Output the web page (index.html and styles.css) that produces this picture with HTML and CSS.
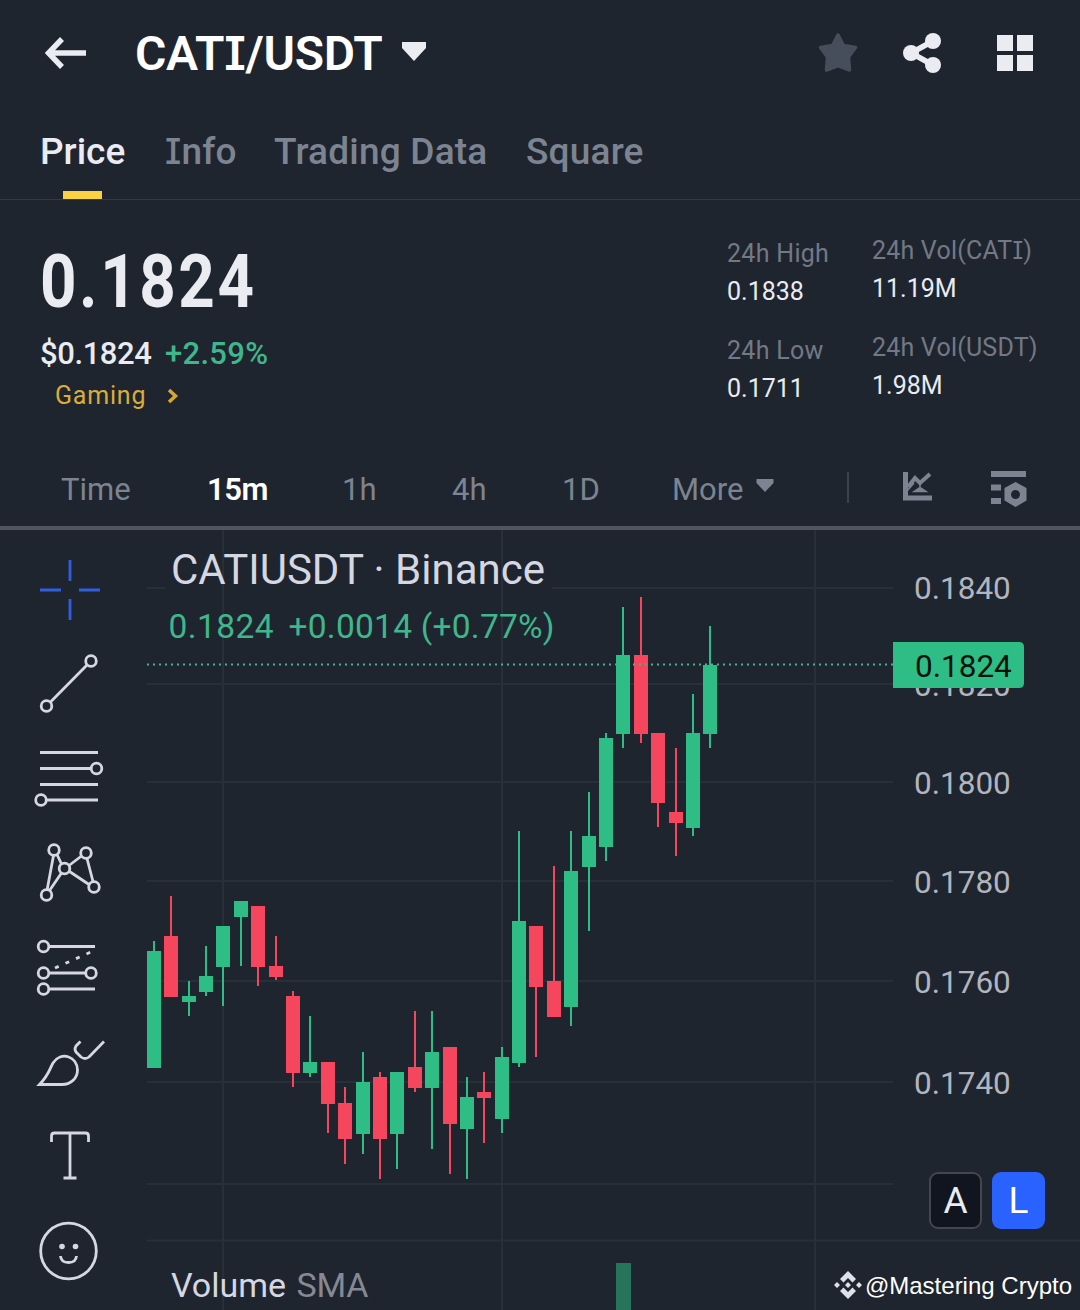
FILE: index.html
```html
<!DOCTYPE html>
<html lang="en">
<head>
  <meta charset="UTF-8">
  <meta name="viewport" content="width=device-width, initial-scale=1.0">
  <title>CATI/USDT</title>
  <link rel="stylesheet" href="styles.css">
</head>
<body>
  <!-- Header -->
  <header class="topbar">
    <svg class="back" width="42" height="34" viewBox="0 0 42 34"><path d="M17 3 L3.500 17 L17 31 M4 17 H41" fill="none" stroke="#eaecf2" stroke-width="5.500"/></svg>
    <h1 class="pair">CAT<span class="slab">I</span>/USDT</h1>
    <svg class="caret" width="26" height="20" viewBox="0 0 26 20"><path d="M1 0 H25 V6 L13 19 L1 6 Z" fill="#eaecf2"/></svg>
    <div class="actions">
      <svg width="40" height="42" viewBox="0 0 40 42"><path d="M20 3 L25.500 13.500 L37.500 15.500 L30.500 25 L31.500 38 L20 33.500 L8.500 38 L9.500 25 L2.500 15.500 L14.500 13.500 Z" fill="#474e5b" stroke="#474e5b" stroke-width="3.500" stroke-linejoin="round"/></svg>
      <svg width="40" height="42" viewBox="0 0 40 42"><path d="M31 9 L9 21 L31 33" fill="none" stroke="#eaecf2" stroke-width="5.500"/><circle cx="31" cy="9" r="8" fill="#eaecf2"/><circle cx="9" cy="21" r="8" fill="#eaecf2"/><circle cx="31" cy="33" r="8" fill="#eaecf2"/></svg>
      <svg width="36" height="36" viewBox="0 0 36 36"><path d="M0 0H16V16H0Z M20 0H36V16H20Z M0 20H16V36H0Z M20 20H36V36H20Z" fill="#eaecf2"/></svg>
    </div>
  </header>

  <!-- Tabs -->
  <nav class="tabs">
    <span class="tab active">Price</span>
    <span class="tab info"><span class="slab">I</span>nfo</span>
    <span class="tab trading">Trading Data</span>
    <span class="tab square">Square</span>
  </nav>

  <!-- Price summary -->
  <section class="summary">
    <div class="quote">
      <div class="last-price">0.1824</div>
      <div class="sub-price"><span class="fiat">$0.1824</span><span class="change">+2.59%</span></div>
      <div class="tag">Gaming <svg width="12" height="16" viewBox="0 0 12 16"><path d="M2 2 L8.500 8 L2 14" fill="none" stroke="#d9a92e" stroke-width="3.500"/></svg></div>
    </div>
    <div class="stats">
      <div class="stat-col">
        <div class="label">24h High</div>
        <div class="value">0.1838</div>
        <div class="label second">24h Low</div>
        <div class="value">0.1711</div>
      </div>
      <div class="stat-col volumes">
        <div class="label">24h Vol(CAT<span class="slab">I</span>)</div>
        <div class="value">11.19M</div>
        <div class="label second">24h Vol(USDT)</div>
        <div class="value">1.98M</div>
      </div>
    </div>
  </section>

  <!-- Intervals -->
  <nav class="intervals">
    <span>Time</span>
    <span class="active">15m</span>
    <span>1h</span>
    <span>4h</span>
    <span>1D</span>
    <span class="more">More <svg width="18" height="14" viewBox="0 0 18 14"><path d="M0.500 0 H17.500 V4 L9 13 L0.500 4 Z" fill="#7d8491"/></svg></span>
    <i class="divider"></i>
    <svg class="chart-icon" width="30" height="30" viewBox="0 0 30 30"><path d="M2.500 0 V26 H29" fill="none" stroke="#7d8491" stroke-width="5"/><path d="M5 15 L12 6 L17 11 L27 2" fill="none" stroke="#7d8491" stroke-width="4"/><path d="M4 19 L11 11 M11 19.500 L17 15.500 L23 19.500 Z M17 11 V17" fill="#7d8491" stroke="#7d8491" stroke-width="1.500"/></svg>
    <svg width="36" height="38" viewBox="0 0 36 38"><path d="M0 4 H35 M0 17.500 H10 M0 31 H10" stroke="#7d8491" stroke-width="6"/><path fill-rule="evenodd" d="M24.500 12 L35.500 18 V30.500 L24.500 37 L13.500 30.500 V18 Z M24.500 20 A4.500 4.500 0 1 0 24.500 29 A4.500 4.500 0 1 0 24.500 20 Z" fill="#7d8491"/></svg>
  </nav>

  <main class="chart-area">
    <!-- Drawing tools -->
    <aside class="tools">
      <svg viewBox="0 0 147 94" class="cross"><path d="M70 17 V38 M70 56 V77 M40 47 H61 M79 47 H100"/></svg>
      <svg viewBox="0 0 147 94"><path d="M50.500 65 L87 28"/><circle cx="46.500" cy="69" r="5.300"/><circle cx="91" cy="24" r="5.300"/></svg>
      <svg viewBox="0 0 147 94"><path d="M40 21.500 H98 M40 37.500 H91 M40 53.500 H98 M46.500 69 H98"/><circle cx="96.500" cy="37.500" r="5.300"/><circle cx="41" cy="69" r="5.300"/></svg>
      <svg viewBox="0 0 147 94"><path d="M53.500 30.500 L47.200 64.500 M57 29.500 L61.500 39 M69 40.500 L81.500 31 M87 33.500 L93 56.500 M89 59.500 L69.500 46.500 M61.500 48 L49.500 65.500"/><circle cx="54" cy="25" r="5.300"/><circle cx="86" cy="28" r="5.300"/><circle cx="64.500" cy="43.500" r="5.300"/><circle cx="46.500" cy="70" r="5.300"/><circle cx="94" cy="62" r="5.300"/></svg>
      <svg viewBox="0 0 147 94"><path d="M49 27.500 H95 M49 54 H85.500 M49 70 H95"/><path d="M55 49 L92 32.500" stroke-dasharray="4 7.500"/><circle cx="43.500" cy="27.500" r="5.300"/><circle cx="43.500" cy="54" r="5.300"/><circle cx="91" cy="54" r="5.300"/><circle cx="43.500" cy="70" r="5.300"/></svg>
      <svg viewBox="0 0 147 94"><path d="M39.500 71.500 C49 62 50 55 53 50 C61 38 77 43 77.500 57 C77.500 66 70 71.500 62 71.500 Z M80.500 28.500 L76 33 Q74 36 76 39 L81 44 Q85 47 89 44 L104 28.500"/></svg>
      <svg viewBox="0 0 147 94"><path d="M51.500 35 V29 Q51.500 26 54.500 26 H85.500 Q88.500 26 88.500 29 V35 M70 26 V71 M63.500 71 H76.500"/></svg>
      <svg viewBox="0 0 147 94"><circle cx="68.500" cy="50" r="27.800"/><path d="M60.500 55 Q61 61.500 68.500 61.500 Q76 61.500 76.500 55"/><circle class="eye" cx="62" cy="45.500" r="2.800"/><circle class="eye" cx="75.500" cy="45.500" r="2.800"/></svg>
    </aside>

    <!-- Candles, grid and price axis -->
    <div class="chart">
      <svg class="plot" width="933" height="780" viewBox="147 530 933 780">
        <path class="grid" d="M223 530 V1310 M502 530 V1310 M815 530 V1310 M147 588 H165 M552 588 H893 M147 684 H893 M147 782 H893 M147 881 H893 M147 981 H893 M147 1082 H893 M147 1184 H893 M147 1240.500 H1080"/>
        <g id="candles"></g>
        <rect x="616" y="1263" width="15" height="47" fill="#27745c"/>
        <path class="last-line" d="M147 664.500 H893"/>
        <g class="axis">
          <text x="914" y="599">0.1840</text>
          <text x="914" y="696">0.1820</text>
          <text x="914" y="794">0.1800</text>
          <text x="914" y="893">0.1780</text>
          <text x="914" y="993">0.1760</text>
          <text x="914" y="1094">0.1740</text>
          <path d="M893 642 H1019 Q1024 642 1024 647 V683 Q1024 688 1019 688 H893 Z" fill="#2ebd85"/>
          <text x="915" y="677" class="current">0.1824</text>
        </g>
        <text x="171" y="584" class="symbol" textLength="374">CATIUSDT · Binance</text>
        <text x="168.500" y="638" class="ohlc" textLength="105">0.1824</text>
        <text x="288.500" y="638" class="ohlc" textLength="266">+0.0014 (+0.77%)</text>
        <text x="171" y="1297" class="volume" textLength="115">Volume</text>
        <text x="296.500" y="1297" class="volume sma" textLength="72">SMA</text>
      </svg>
      <div class="scale-buttons">
        <span class="scale auto">A</span>
        <span class="scale log">L</span>
      </div>
      <div class="watermark">
        <svg width="28" height="28" viewBox="0 0 28 28"><path d="M14 0 L22 8 L18.500 11.500 L14 7 L9.500 11.500 L6 8 Z M14 28 L22 20 L18.500 16.500 L14 21 L9.500 16.500 L6 20 Z M14 11 L17 14 L14 17 L11 14 Z M3 11 L6 14 L3 17 L0 14 Z M25 11 L28 14 L25 17 L22 14 Z" fill="#dfe1ea"/></svg>
        <span>@Mastering Crypto</span>
      </div>
    </div>
  </main>

  <script>
    // x, body top, body bottom, wick top, wick bottom, up
    const candles = [
      [147, 951, 1068, 941, 1068, 1], [164, 936, 997, 896, 997, 0], [182, 996, 1002, 981, 1016, 1],
      [199, 976, 992, 946, 996, 1], [216, 926, 967, 926, 1006, 1], [234, 901, 917, 901, 966, 1],
      [251, 906, 967, 906, 986, 0], [269, 966, 977, 936, 980, 0], [286, 996, 1073, 991, 1087, 0],
      [303, 1062, 1073, 1016, 1077, 1], [321, 1062, 1104, 1062, 1133, 0], [338, 1103, 1139, 1087, 1164, 0],
      [356, 1082, 1134, 1052, 1154, 1], [373, 1077, 1139, 1072, 1179, 0], [390, 1072, 1134, 1072, 1169, 1],
      [408, 1067, 1088, 1011, 1092, 0], [425, 1052, 1088, 1011, 1149, 1], [443, 1047, 1124, 1047, 1174, 0],
      [460, 1097, 1129, 1077, 1179, 1], [477, 1092, 1098, 1072, 1143, 0], [495, 1057, 1119, 1047, 1133, 1],
      [512, 921, 1063, 831, 1067, 1], [529, 926, 987, 926, 1057, 0], [547, 981, 1017, 866, 1017, 0],
      [564, 871, 1007, 831, 1026, 1], [582, 836, 867, 792, 931, 1], [599, 738, 847, 733, 861, 1],
      [616, 655, 734, 607, 748, 1], [634, 655, 734, 597, 743, 0], [651, 733, 803, 733, 827, 0],
      [669, 812, 823, 748, 856, 0], [686, 733, 828, 694, 836, 1], [703, 665, 734, 626, 748, 1]
    ];
    document.getElementById('candles').innerHTML = candles.map(([x, top, bottom, high, low, up]) =>
      `<g class="${up ? 'up' : 'down'}">
        <rect x="${x + 6}" y="${high}" width="2" height="${low - high}"/>
        <rect x="${x}" y="${top}" width="14" height="${bottom - top}"/>
      </g>`).join('');
  </script>
</body>
</html>
```
FILE: styles.css
```css
* {
  box-sizing: border-box;
}

body {
  margin: 0;
  width: 1080px;
  height: 1310px;
  overflow: hidden;
  background-color: #1f252f;
  font-family: Roboto, "Liberation Sans", sans-serif;
  color: #eaecf2;
}

svg {
  display: block;
  flex: none;
}

/* Capital I with serifs */
.slab {
  font-family: Inter, Roboto, sans-serif;
  font-feature-settings: "cv08";
  font-size: 0.97em;
  line-height: 1;
}

/* Header */
.topbar {
  display: flex;
  align-items: center;
  height: 106px;
  padding: 0 47px 0 45px;
}

.pair {
  margin: 2px 0 0 48px;
  width: 266px;
  font-size: 48px;
  font-weight: 600;
  line-height: 60px;
  letter-spacing: -0.3px;
  white-space: nowrap;
  color: #fff;
}

.caret {
  margin-bottom: 2px;
}

.actions {
  display: flex;
  align-items: center;
  margin-left: auto;
}

.actions svg:nth-child(2) {
  margin: 0 55px 0 44px;
}

/* Tabs */
.tabs {
  display: flex;
  height: 94px;
  padding-left: 40px;
  border-bottom: 1px solid #323943;
  font-size: 37px;
  font-weight: 500;
  line-height: 91px;
  letter-spacing: 0.2px;
  color: #7d8491;
  white-space: nowrap;
}

.tab {
  width: 125px;
}

.tab.info {
  width: 109px;
}

.tab.trading {
  width: 252px;
}

.tab.active {
  position: relative;
  letter-spacing: 0;
  color: #eaecf2;
}

.tab.active::after {
  content: "";
  position: absolute;
  left: 23px;
  bottom: 0;
  width: 39px;
  height: 8px;
  background-color: #f9d142;
}

/* Price summary */
.summary {
  display: flex;
  height: 252px;
  padding-left: 40px;
}

.quote {
  width: 687px;
  padding-top: 42px;
}

.last-price {
  font-size: 74px;
  font-weight: 700;
  line-height: 80px;
  letter-spacing: 3px;
  transform: scaleX(0.86);
  transform-origin: left;
}

.sub-price {
  display: flex;
  margin-top: 14px;
  font-size: 31px;
  font-weight: 500;
  line-height: 36px;
}

.fiat {
  width: 125px;
  letter-spacing: -0.4px;
}

.change {
  letter-spacing: 0.3px;
  color: #3fb68b;
}

.tag {
  display: flex;
  align-items: center;
  gap: 21px;
  margin: 6px 0 0 15px;
  font-size: 25px;
  line-height: 36px;
  letter-spacing: 0.8px;
  color: #d9ad3a;
}

.stats {
  display: flex;
  padding-top: 35px;
  font-size: 25px;
  line-height: 38px;
  white-space: nowrap;
}

.stat-col {
  width: 145px;
}

.volumes {
  margin-top: -3px;
}

.label {
  letter-spacing: 0.3px;
  color: #727985;
}

.volumes .label {
  letter-spacing: 0.2px;
}

.label.second {
  margin-top: 21px;
}

/* Intervals */
.intervals {
  display: flex;
  align-items: center;
  height: 78px;
  padding-left: 61px;
  border-bottom: 4px solid #50555f;
  font-size: 31px;
  color: #7d8491;
}

.intervals span {
  width: 110px;
}

.intervals span:first-child {
  width: 146px;
}

.intervals .active {
  width: 135px;
  font-weight: 600;
  letter-spacing: -0.5px;
  color: #fff;
}

.intervals .more {
  display: flex;
  align-items: center;
  gap: 13px;
  width: 175px;
}

.more svg {
  margin-bottom: 6px;
}

.divider {
  width: 2px;
  height: 31px;
  margin-bottom: 4px;
  background-color: #3b424d;
}

.chart-icon {
  margin: 0 58px 4px 54px;
}

/* Chart */
.chart-area {
  display: flex;
  height: 780px;
}

.tools {
  width: 147px;
  padding-top: 13px;
}

.tools svg {
  width: 147px;
  height: 94px;
  fill: none;
  stroke: #d5d7e1;
  stroke-width: 2.8;
}

.tools .cross {
  stroke: #2f5fe0;
}

.tools .eye {
  fill: #d5d7e1;
  stroke: none;
}

.chart {
  position: relative;
  width: 933px;
}

.grid {
  fill: none;
  stroke: #292f39;
  stroke-width: 2;
}

.last-line {
  stroke: #4fae8e;
  stroke-width: 2;
  stroke-dasharray: 2 4;
}

.up {
  fill: #2ebd85;
}

.down {
  fill: #f6465d;
}

.axis {
  font-size: 31.5px;
  fill: #b2b5be;
}

.axis .current {
  fill: #06110d;
}

.symbol {
  font-size: 42px;
  fill: #d5d7e1;
}

.ohlc {
  font-size: 33.5px;
  fill: #3fb68b;
}

.volume {
  font-size: 34px;
  fill: #d5d7e1;
}

.sma {
  fill: #868993;
}

/* Overlays on the price axis */
.scale-buttons {
  position: absolute;
  right: 35px;
  top: 642px;
  display: flex;
  gap: 10px;
}

.scale {
  width: 53px;
  height: 57px;
  border-radius: 9px;
  font-size: 37px;
  line-height: 57px;
  text-align: center;
}

.auto {
  border: 2px solid #434651;
  line-height: 53px;
  background-color: #11151f;
}

.log {
  background-color: #2962ff;
  color: #fff;
}

.watermark {
  position: absolute;
  right: 8px;
  bottom: 9px;
  display: flex;
  align-items: center;
  gap: 3px;
  font-family: "Liberation Sans", sans-serif;
  font-size: 24px;
  line-height: 30px;
  color: #fff;
}

.watermark span {
  margin-top: 2px;
}
```
